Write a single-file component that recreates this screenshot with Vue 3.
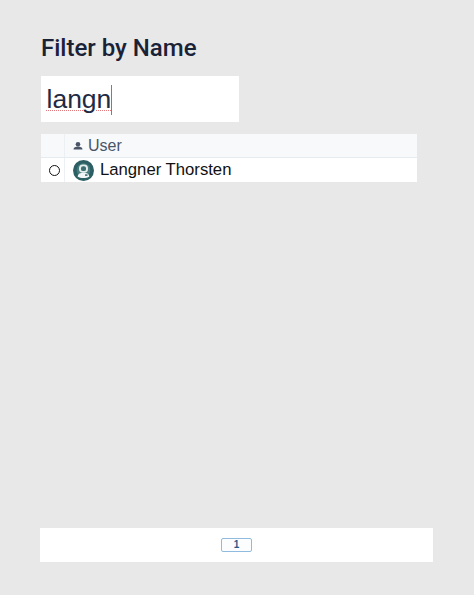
<script setup>
const query = 'langn'
const users = [{ name: 'Langner Thorsten' }]
</script>

<template>
  <main class="page">
    <h1 class="title">Filter by Name</h1>
    <div class="search">
      <span class="typed">{{ query }}</span><span class="caret"></span>
    </div>
    <section class="table">
      <div class="row head">
        <div class="check"></div>
        <div class="cell">
          <svg class="person" viewBox="0 0 10 10"><circle cx="5" cy="3.200" r="2.300" /><path d="M.5 8.600c0-2.300 2.200-3 4.500-3s4.500.7 4.500 3z" /></svg>
          <span>User</span>
        </div>
      </div>
      <div v-for="u in users" :key="u.name" class="row">
        <div class="check"><span class="radio"></span></div>
        <div class="cell">
          <svg class="avatar" viewBox="0 0 22 22">
            <circle cx="11" cy="11" r="11" fill="#2c5f63" />
            <circle cx="11" cy="10.500" r="7.200" fill="#477a7d" />
            <rect x="6.300" y="4.800" width="9.400" height="8.600" rx="4" fill="#e6eded" />
            <rect x="8.300" y="6.600" width="5.400" height="5" rx="2.300" fill="#3a6d70" />
            <path d="M4.800 17.200c.4-2.800 3-3.800 6.200-3.800s5.800 1 6.200 3.800c-1.700 1.100-3.800 1.700-6.200 1.700s-4.500-.6-6.200-1.700z" fill="#f2f5f5" />
            <rect x="12.600" y="15" width="2.600" height="1.600" fill="#33686b" />
          </svg>
          <span class="name">{{ u.name }}</span>
        </div>
      </div>
    </section>
    <footer class="pager">
      <button class="page-btn">1</button>
    </footer>
  </main>
</template>

<style>
html, body { margin: 0; background: #e8e8e8; }
</style>

<style scoped>
.page {
  box-sizing: border-box;
  height: 595px;
  padding: 34px 41px 33px 40px;
  display: flex;
  flex-direction: column;
  align-items: flex-start;
  background: #e8e8e8;
  font-family: Roboto, "Liberation Sans", sans-serif;
}
.title {
  margin: 0 0 13px 1px;
  font-size: 24px;
  line-height: 29px;
  font-weight: 500;
  color: #1a2238;
}
.search {
  box-sizing: border-box;
  width: 198px;
  height: 46px;
  margin-left: 1px;
  padding: 1px 0 0 5.500px;
  display: flex;
  align-items: center;
  background: #fff;
}
.typed {
  font-family: "Liberation Sans", Arial, sans-serif;
  font-size: 26.500px;
  color: #1f2a44;
  text-decoration: underline dotted #e0787c 1px;
  text-underline-offset: 2px;
}
.caret {
  width: 1px;
  height: 30px;
  background: #718096;
}
.table {
  width: 376px;
  margin: 12px 0 0 1px;
  background: #fff;
  font-family: "Liberation Sans", Arial, sans-serif;
}
.row {
  display: flex;
  height: 24px;
}
.head {
  background: #f7f9fb;
  border-bottom: 1px solid #e6ebef;
  box-sizing: border-box;
  color: #4a5568;
  font-size: 16px;
}
.check {
  box-sizing: border-box;
  width: 24px;
  padding-left: 3px;
  padding-top: 1px;
  display: flex;
  align-items: center;
  justify-content: center;
  border-right: 1px solid #edf0f3;
}
.radio {
  box-sizing: border-box;
  width: 11px;
  height: 11px;
  border: 1.800px solid #111;
  border-radius: 50%;
}
.cell {
  display: flex;
  align-items: center;
  padding-left: 8px;
}
.person {
  width: 10px;
  height: 10px;
  margin-right: 5px;
  fill: #4a5568;
}
.avatar {
  width: 21px;
  height: 21px;
  margin-right: 6px;
}
.name {
  font-size: 16.700px;
  color: #111;
  margin-bottom: 1px;
}
.pager {
  box-sizing: border-box;
  width: 393px;
  height: 34px;
  margin-top: auto;
  display: flex;
  align-items: center;
  justify-content: center;
  background: #fff;
}
.page-btn {
  box-sizing: border-box;
  width: 31px;
  height: 14px;
  padding: 0;
  border: 1px solid #90bbdf;
  border-radius: 2px;
  background: #fbfdff;
  color: #2a5a88;
  font: 700 10px/12px "Liberation Sans", Arial, sans-serif;
}
</style>
